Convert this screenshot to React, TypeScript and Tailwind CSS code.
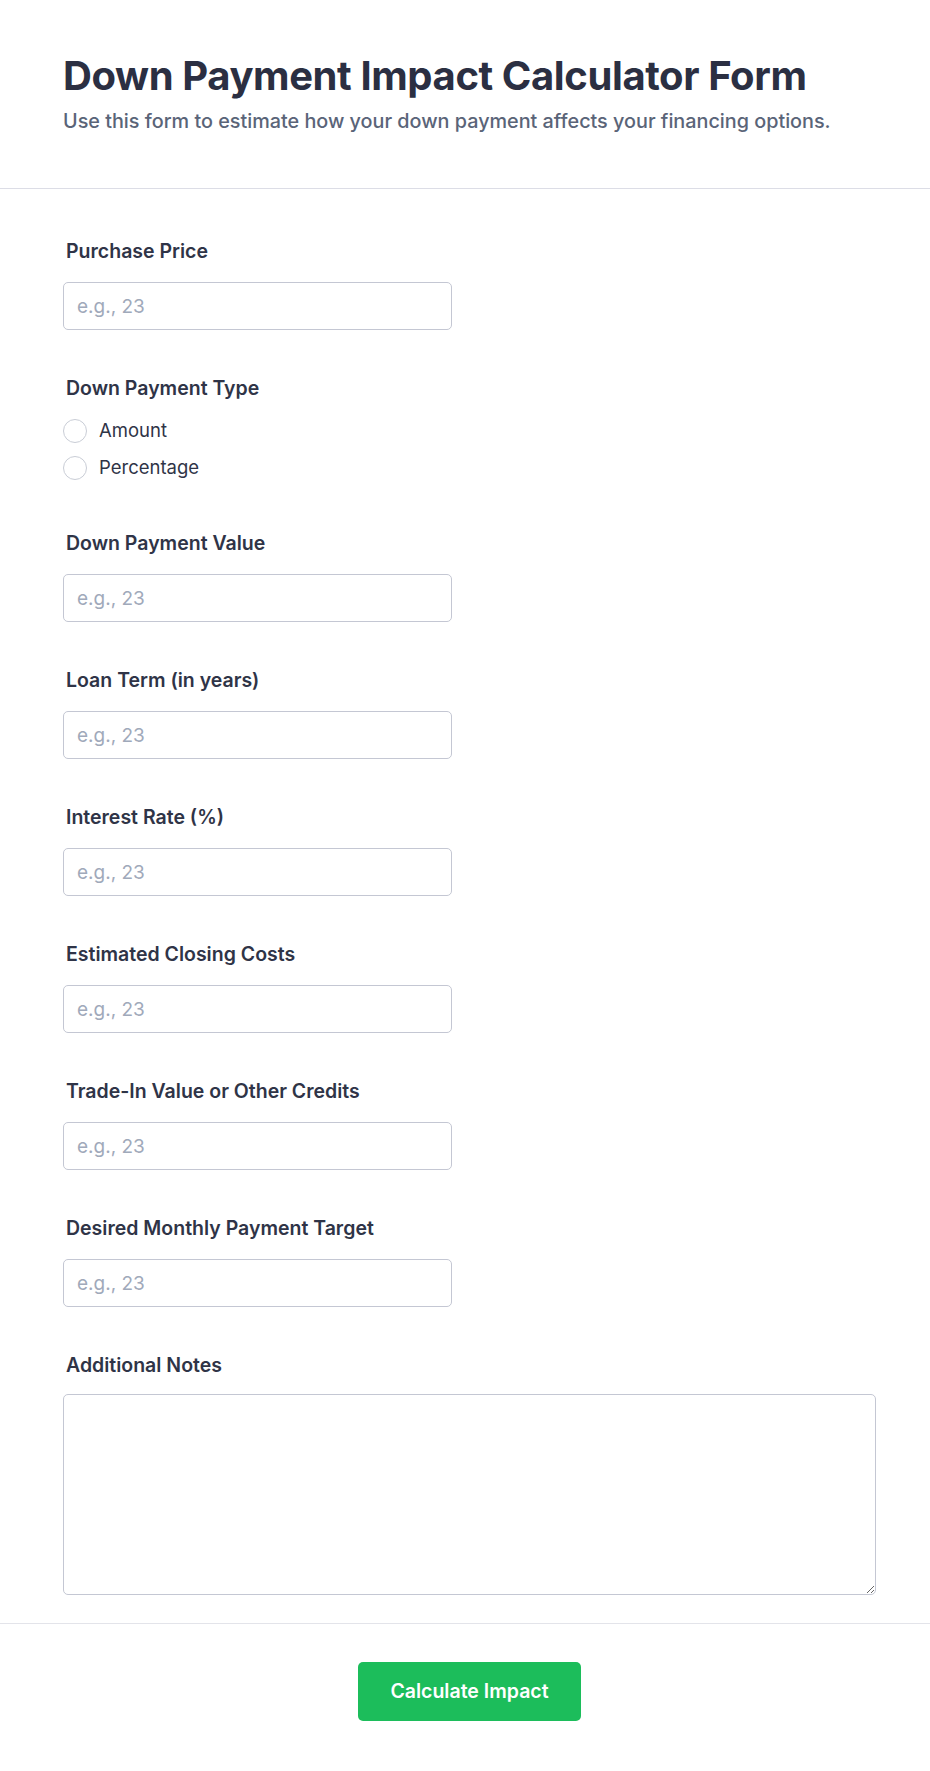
import React, { useState } from 'react';

const FIELDS_TOP = ['Purchase Price'];
const FIELDS_BOTTOM = [
  'Down Payment Value',
  'Loan Term (in years)',
  'Interest Rate (%)',
  'Estimated Closing Costs',
  'Trade-In Value or Other Credits',
  'Desired Monthly Payment Target',
];

const NumberField: React.FC<{ label: string }> = ({ label }) => (
  <div className="flex flex-col">
    <label className="text-[19.5px] leading-[28px] font-semibold text-[#2f3447] pl-[3px] mb-[17px]">{label}</label>
    <input
      type="text"
      placeholder="e.g., 23"
      className="w-[389px] h-[48px] rounded-[5px] border border-[#c4c7d3] px-[13px] text-[19px] text-[#2f3447] placeholder:text-[#a0a9ba] outline-none"
    />
  </div>
);

export default function App() {
  const [type, setType] = useState('');

  return (
    <div className="w-[930px] min-h-[1771px] bg-white" style={{ fontFamily: 'Inter, "Noto Sans", sans-serif' }}>
      <div className="pl-[63px] pr-[54px] pt-[52px] pb-[53px] border-b border-[#dcdde6]">
        <h1 className="text-[40px] leading-[48px] font-bold text-[#2b2f42] tracking-[-0.4px]">Down Payment Impact Calculator Form</h1>
        <p className="text-[19.8px] leading-[28px] font-medium text-[#5a6478] mt-[7px]">
          Use this form to estimate how your down payment affects your financing options.
        </p>
      </div>

      <form className="pl-[63px] pr-[54px] pt-[48px] pb-[28px] flex flex-col gap-[44px]" onSubmit={e => e.preventDefault()}>
        {FIELDS_TOP.map(f => <NumberField key={f} label={f} />)}

        <div className="flex flex-col mb-[3px]">
          <span className="text-[19.5px] leading-[28px] font-semibold text-[#2f3447] pl-[3px] mb-[15px]">Down Payment Type</span>
          <div className="flex flex-col gap-[9px]">
            {['Amount', 'Percentage'].map(opt => (
              <label key={opt} className="flex items-center gap-[12px] h-[28px] cursor-pointer" onClick={() => setType(opt)}>
                <span
                  className={`w-[24px] h-[24px] rounded-full border bg-white flex items-center justify-center ${type === opt ? 'border-[#1cbd5b]' : 'border-[#c9cdd6]'}`}
                >
                  {type === opt && <span className="w-[12px] h-[12px] rounded-full bg-[#1cbd5b]" />}
                </span>
                <span className="text-[18.5px] text-[#2f3447]">{opt}</span>
              </label>
            ))}
          </div>
        </div>

        {FIELDS_BOTTOM.map(f => <NumberField key={f} label={f} />)}

        <div className="flex flex-col">
          <label className="text-[19.5px] leading-[28px] font-semibold text-[#2f3447] pl-[3px] mb-[15px]">Additional Notes</label>
          <textarea className="w-full h-[201px] rounded-[5px] border border-[#c4c7d3] px-[13px] py-[10px] text-[19px] text-[#2f3447] outline-none" />
        </div>
      </form>

      <div className="border-t border-[#e3e4ea] pt-[38px] pb-[50px] pl-[63px] pr-[54px] flex justify-center">
        <button className="w-[223px] h-[59px] rounded-[5px] bg-[#1cbd5b] text-white text-[19.5px] font-semibold">
          Calculate Impact
        </button>
      </div>
    </div>
  );
}
